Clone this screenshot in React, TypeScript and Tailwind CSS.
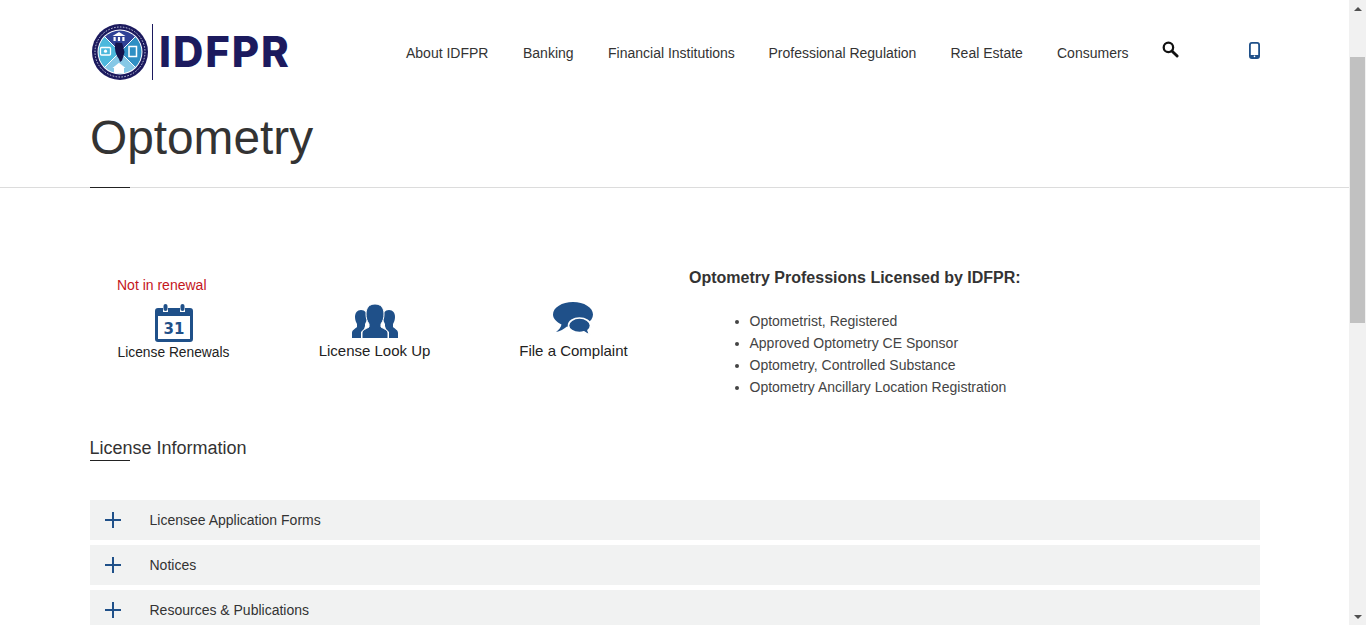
const navItems = [
  { label: 'About IDFPR', width: 'w-[83px]' },
  { label: 'Banking', width: 'w-[51px]' },
  { label: 'Financial Institutions', width: 'w-[126.5px]' },
  { label: 'Professional Regulation', width: 'w-[148px]' },
  { label: 'Real Estate', width: 'w-[72.5px]' },
  { label: 'Consumers', width: 'w-[71px]' },
]

const professions = [
  'Optometrist, Registered',
  'Approved Optometry CE Sponsor',
  'Optometry, Controlled Substance',
  'Optometry Ancillary Location Registration',
]

const accordionItems = ['Licensee Application Forms', 'Notices', 'Resources & Publications']

function Seal() {
  return (
    <svg width="56" height="56" viewBox="0 0 56 56" className="shrink-0">
      <circle cx="28" cy="28" r="28" fill="#1c1a5e" />
      <circle cx="28" cy="28" r="25" fill="none" stroke="#cfd4e6" strokeWidth="1" strokeDasharray="1.5 1.5" />
      <circle cx="28" cy="28" r="22.5" fill="#fff" />
      <path d="M28 28 L12.8 12.8 A21.5 21.5 0 0 1 43.2 12.8 Z" fill="#2f4196" />
      <path d="M28 28 L43.2 12.8 A21.5 21.5 0 0 1 43.2 43.2 Z" fill="#2f8fc4" />
      <path d="M28 28 L43.2 43.2 A21.5 21.5 0 0 1 12.8 43.2 Z" fill="#86c8e6" />
      <path d="M28 28 L12.8 43.2 A21.5 21.5 0 0 1 12.8 12.8 Z" fill="#4cb8dc" />
      <path d="M12.8 12.8 L43.2 43.2 M43.2 12.8 L12.8 43.2" stroke="#fff" strokeWidth="1" />
      <path d="M20.5 12 L27 8 L33.5 12 Z M21.5 13 h2.2 v4 h-2.2 Z M25.9 13 h2.2 v4 h-2.2 Z M30.3 13 h2.2 v4 h-2.2 Z" fill="#fff" />
      <rect x="8.5" y="23.5" width="10" height="7.5" rx="1" fill="none" stroke="#fff" strokeWidth="1.3" />
      <circle cx="13.5" cy="27.2" r="1.6" fill="#fff" />
      <rect x="37" y="22.5" width="7.5" height="10" fill="none" stroke="#fff" strokeWidth="1.5" />
      <path d="M20.5 44 L27 38.8 L33.5 44 H32 V49 H22 V44 Z" fill="#fff" />
      <path d="M23.5 18.5 L30 19 L31 22 L32.5 28 L31.5 32 L30 36.5 L28 38 L27 35 L25 32 L23.5 28 L22.8 23 Z" fill="#14124c" />
    </svg>
  )
}

function CalendarIcon() {
  return (
    <svg width="38" height="38" viewBox="0 0 38 38" className="block">
      <path d="M3 4 H8 V8 H13 V4 H25 V8 H30 V4 H35 Q38 4 38 7 V35 Q38 38 35 38 H3 Q0 38 0 35 V7 Q0 4 3 4 Z M3 12 V35 H35 V12 Z" fill="#1f5089" fillRule="evenodd" />
      <rect x="8.5" y="0" width="4" height="7" rx="2" fill="#1f5089" />
      <rect x="25.5" y="0" width="4" height="7" rx="2" fill="#1f5089" />
      <text x="19" y="30" textAnchor="middle" fontFamily="'DejaVu Sans', sans-serif" fontWeight="700" fontSize="15" fill="#1f5089">31</text>
    </svg>
  )
}

function PeopleIcon() {
  return (
    <svg width="46" height="34" viewBox="0 0 46 34" className="block">
      <path d="M9 6 C13 6 15 9 15 13 C15 16 14 18 13 20 V22 L12 25 L9 28 V34 H0 V29 C0 26 3 25 5 23 V20 C4 18 3 16 3 13 C3 9 5 6 9 6 Z" fill="#1f5089" />
      <path d="M37 6 C33 6 31 9 31 13 C31 16 32 18 33 20 V22 L34 25 L37 28 V34 H46 V29 C46 26 43 25 41 23 V20 C42 18 43 16 43 13 C43 9 41 6 37 6 Z" fill="#1f5089" />
      <path d="M23 0 C29 0 32 4 32 10 C32 14 31 17 29 20 V23 C32 25 36 26 36 29 V34.5 H10 V29 C10 26 14 25 17 23 V20 C15 17 14 14 14 10 C14 4 17 0 23 0 Z" fill="#1f5089" stroke="#fff" strokeWidth="1" />
    </svg>
  )
}

function ChatIcon() {
  return (
    <svg width="41" height="34" viewBox="0 0 41 34" className="block">
      <path d="M20 0 C31 0 40 5.5 40 12.5 C40 19.5 31 25 20 25 C18 25 16 24.8 14 24.4 C11 27 7 29 3 30 C6 28 8 25 8.5 22.5 C3.5 20 0 16.5 0 12.5 C0 5.5 9 0 20 0 Z" fill="#1f5089" />
      <path d="M26.5 16 C32.5 16 37.5 19.5 37.5 23.5 C37.5 25.5 36.5 27 35 28.3 C35.3 30 36 31.5 37.5 33 C34.5 32.5 32.5 31 31 29.8 C29.5 30.3 28 30.5 26.5 30.5 C20.5 30.5 15.5 27.5 15.5 23.5 C15.5 19.5 20.5 16 26.5 16 Z" fill="#1f5089" stroke="#fff" strokeWidth="1.6" />
    </svg>
  )
}

function QuickLink({
  label,
  icon,
  className,
  iconClass,
  labelClass,
}: {
  label: string
  icon: React.ReactNode
  className: string
  iconClass: string
  labelClass: string
}) {
  return (
    <div className={`flex flex-col items-center ${className}`}>
      <div className={iconClass}>{icon}</div>
      <span className={`leading-[20px] text-[#222] whitespace-nowrap ${labelClass}`}>{label}</span>
    </div>
  )
}

export default function App() {
  return (
    <div className="flex h-[625px] overflow-hidden bg-white text-[#333] font-['Liberation_Sans',Arial,sans-serif]">
      <main className="w-[1349px] shrink-0">
        <header className="flex h-[103px] pl-[92px] pr-[89px]">
          <div className="flex items-center h-[103px] pt-[1px] w-[314px] shrink-0 self-start">
            <Seal />
            <div className="ml-[4px] w-px h-[56px] bg-[#1c1a5e]" />
            <span className="ml-[6px] text-[42px] leading-none font-extrabold tracking-[1.9px] text-[#1c1a5e] font-['Inter',sans-serif]">IDFPR</span>
          </div>
          <nav className="flex items-start pt-[44px] text-[14px] leading-[18px] text-[#333] gap-[34px]">
            {navItems.map(item => (
              <a key={item.label} className={`${item.width} whitespace-nowrap`}>{item.label}</a>
            ))}
            <svg width="17" height="17" viewBox="0 0 18 18" className="-mt-[3px] shrink-0">
              <circle cx="6.8" cy="6.8" r="5" fill="none" stroke="#111" strokeWidth="2.4" />
              <path d="M10.5 10.5 L16 16" stroke="#111" strokeWidth="3" strokeLinecap="round" />
            </svg>
            <svg width="11" height="17" viewBox="0 0 11 17" className="ml-[36px] -mt-[2px] shrink-0">
              <rect x="0.9" y="0.9" width="9.2" height="15.2" rx="2" fill="#fff" stroke="#1f5089" strokeWidth="1.8" />
              <path d="M1 13 H10 V15 Q10 16 9 16 H2 Q1 16 1 15 Z" fill="#1f5089" />
              <circle cx="5.5" cy="14.4" r="0.8" fill="#fff" />
            </svg>
          </nav>
        </header>

        <div className="h-[85px] border-b border-[#dcdcdc] pl-[90px]">
          <div className="w-[40px] h-[84px] border-b border-[#222] box-content">
            <h1 className="text-[47.8px] leading-[69px] font-normal whitespace-nowrap text-[#333]">Optometry</h1>
          </div>
        </div>

        <section className="flex pl-[90px] pt-[87px] h-[232px]">
          <div className="w-[599px] shrink-0">
            <p className="pl-[27px] text-[14px] leading-[20px] text-[#c4161c]">Not in renewal</p>
            <div className="flex mt-[7px]">
              <QuickLink className="w-[167px]" iconClass="pt-[2px] pb-[1px]" labelClass="text-[13.8px]" label="License Renewals" icon={<CalendarIcon />} />
              <QuickLink className="w-[235px]" iconClass="pt-[2px] pb-[3px]" labelClass="text-[15px]" label="License Look Up" icon={<PeopleIcon />} />
              <QuickLink className="w-[163px]" iconClass="pb-[5px]" labelClass="text-[15px]" label="File a Complaint" icon={<ChatIcon />} />
            </div>
          </div>
          <div className="-mt-[8px]">
            <h3 className="text-[16px] leading-[22px] font-bold text-[#333]">Optometry Professions Licensed by IDFPR:</h3>
            <ul className="mt-[21px] pl-[60.5px] list-disc text-[14px] leading-[22px] text-[#444]">
              {professions.map(p => (
                <li key={p}>{p}</li>
              ))}
            </ul>
          </div>
        </section>

        <section className="pl-[90px] pr-[89px]">
          <div className="h-[41px] w-[40px] pt-[16px] border-b border-[#222]">
            <h2 className="-ml-[0.5px] text-[18px] leading-[24px] font-normal whitespace-nowrap text-[#333]">License Information</h2>
          </div>
          <div className="mt-[39px] flex flex-col gap-[5px]">
            {accordionItems.map(item => (
              <div key={item} className="flex items-center h-[40px] bg-[#f1f2f2] shrink-0">
                <span className="w-[59.5px] flex justify-center pr-[13.5px]">
                  <svg width="16" height="16" viewBox="0 0 16 16">
                    <path d="M0 8 H16 M8 0 V16" stroke="#1f5089" strokeWidth="2" />
                  </svg>
                </span>
                <span className="text-[14px] text-[#333]">{item}</span>
              </div>
            ))}
          </div>
        </section>
      </main>

      <aside className="w-[17px] shrink-0 bg-[#f1f1f1] flex flex-col items-center">
        <div className="h-[17px] w-full flex items-center justify-center">
          <div className="w-0 h-0 border-l-[4px] border-r-[4px] border-b-[4px] border-l-transparent border-r-transparent border-b-[#505050]" />
        </div>
        <div className="mt-[40px] w-[15px] h-[266px] bg-[#c1c1c1]" />
        <div className="mt-auto h-[17px] w-full flex items-center justify-center">
          <div className="w-0 h-0 border-l-[4px] border-r-[4px] border-t-[4px] border-l-transparent border-r-transparent border-t-[#505050]" />
        </div>
      </aside>
    </div>
  )
}
